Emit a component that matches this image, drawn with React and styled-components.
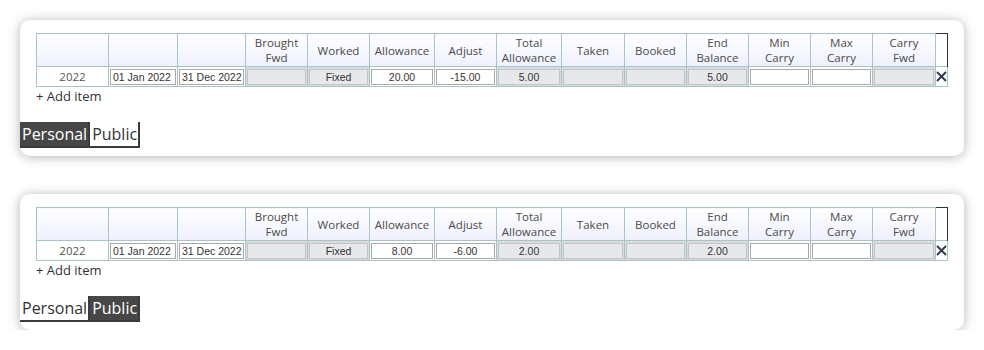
import React from 'react';
import styled, { createGlobalStyle } from 'styled-components';

const GlobalStyle = createGlobalStyle`
  body {
    margin: 0;
    background: #ffffff;
    font-family: 'Open Sans', Arial, sans-serif;
  }
`

const Page = styled.div`
  display: flex;
  flex-direction: column;
  gap: 38px;
  padding: 20px 20px 0 20px;
`

const Card = styled.div`
  width: 944px;
  height: 136px;
  box-sizing: border-box;
  background: #fff;
  border-radius: 10px;
  box-shadow: 0 1px 12px rgba(0, 0, 0, 0.3);
  padding: 13px 0 0 0;
`

const Grid = styled.table`
  margin-left: 16px;
  border-collapse: collapse;
  table-layout: fixed;
  width: 911px;
`

const Head = styled.th`
  height: 32px;
  padding: 0;
  border: 1px solid #a7c4c6;
  background: linear-gradient(#ffffff, #eef0fc);
  color: #4a4a4a;
  font-weight: normal;
  font-size: 11.5px;
  line-height: 15px;
  font-family: 'Open Sans', sans-serif;
`

const HeadLine = styled.div`
  height: 15px;
  overflow: visible;
`

const EmptyHead = styled.th`
  padding: 0;
  border-top: 1px solid #333;
  border-right: 1px solid #333;
  border-bottom: none;
  background: #fff;
`

const Cell = styled.td`
  height: 19px;
  padding: 0 1px;
  border: 1px solid #a7c4c6;
  text-align: center;
  font-family: 'Open Sans', sans-serif;
  font-size: 11.5px;
  color: #555;
  background: ${(props) => (props.grey ? '#d9dbdc' : '#fff')};
`

const Field = styled.div`
  box-sizing: border-box;
  height: 16px;
  line-height: 14px;
  border: 1px solid ${(props) => (props.grey ? '#c3c4c6' : '#a9a9a9')};
  background: ${(props) => (props.grey ? '#e7e8ec' : '#fff')};
  text-align: ${(props) => props.align || 'center'};
  padding: 0 2px;
  font-family: 'Liberation Sans', Arial, sans-serif;
  font-size: 10.5px;
  color: #333;
  white-space: nowrap;
  overflow: hidden;
`

const XCell = styled.td`
  padding: 0;
  border: 1px solid #a7c4c6;
  text-align: center;
  vertical-align: middle;
`

const AddItem = styled.div`
  margin: 0 0 0 16px;
  font-size: 13px;
  line-height: 18px;
  color: #333;
`

const Tabs = styled.div`
  display: flex;
  margin-top: 17px;
`

const Tab = styled.div`
  height: 26px;
  box-sizing: border-box;
  padding: 0 1px 0 2px;
  font-size: 16px;
  line-height: 24px;
  color: ${(props) => (props.active ? '#fff' : '#333')};
  background: ${(props) => (props.active ? '#474747' : '#fff')};
  border-right: 2px solid #3c3c3c;
  border-bottom: 2px solid #3c3c3c;
`

const widths = [72, 69, 68, 62, 62, 65, 62, 65, 63, 62, 62, 62, 62, 63, 12];

const heads = [
  '', '', '', 'Brought\nFwd', 'Worked', 'Allowance', 'Adjust', 'Total\nAllowance',
  'Taken', 'Booked', 'End\nBalance', 'Min\nCarry', 'Max\nCarry', 'Carry\nFwd',
];

const Cross = () => (
  <svg width="11" height="11" viewBox="0 0 11 11" style={{ display: 'block', margin: '0 auto' }}>
    <path d="M1 1 L10 10 M10 1 L1 10" stroke="#2c3645" strokeWidth="1.8" />
  </svg>
);

function Entitlement({ allowance, adjust, total, active }) {
  return (
    <Card>
      <Grid>
        <colgroup>
          {widths.map((w, i) => <col key={i} style={{ width: w }} />)}
        </colgroup>
        <thead>
          <tr>
            {heads.map((h, i) => (
              <Head key={i}>
                {h.split('\n').map((l, j) => <HeadLine key={j}>{l}</HeadLine>)}
              </Head>
            ))}
            <EmptyHead />
          </tr>
        </thead>
        <tbody>
          <tr>
            <Cell>2022</Cell>
            <Cell><Field align="left">01 Jan 2022</Field></Cell>
            <Cell><Field align="left">31 Dec 2022</Field></Cell>
            <Cell grey><Field grey /></Cell>
            <Cell grey><Field grey>Fixed</Field></Cell>
            <Cell><Field>{allowance}</Field></Cell>
            <Cell><Field>{adjust}</Field></Cell>
            <Cell grey><Field grey>{total}</Field></Cell>
            <Cell grey><Field grey /></Cell>
            <Cell grey><Field grey /></Cell>
            <Cell grey><Field grey>{total}</Field></Cell>
            <Cell><Field /></Cell>
            <Cell><Field /></Cell>
            <Cell grey><Field grey /></Cell>
            <XCell><Cross /></XCell>
          </tr>
        </tbody>
      </Grid>
      <AddItem>+ Add item</AddItem>
      <Tabs>
        <Tab active={active === 'Personal'}>Personal</Tab>
        <Tab active={active === 'Public'}>Public</Tab>
      </Tabs>
    </Card>
  );
}

export default function App() {
  return (
    <Page>
      <GlobalStyle />
      <Entitlement allowance="20.00" adjust="-15.00" total="5.00" active="Personal" />
      <Entitlement allowance="8.00" adjust="-6.00" total="2.00" active="Public" />
    </Page>
  );
}
